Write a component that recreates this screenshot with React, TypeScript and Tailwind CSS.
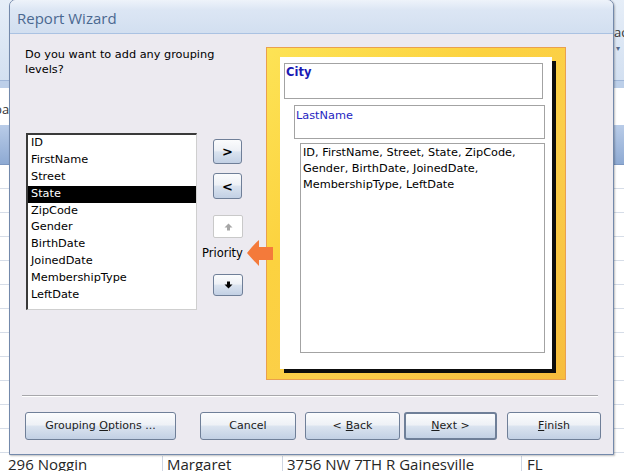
import React from 'react';

const fields = ['ID', 'FirstName', 'Street', 'State', 'ZipCode', 'Gender', 'BirthDate', 'JoinedDate', 'MembershipType', 'LeftDate'];

const btnBg =
  'bg-[linear-gradient(to_bottom,#fbfcfd_0%,#eef1f6_45%,#dae3ef_52%,#c2d0e4_100%)] border border-[#6f7f98] rounded-[3px]';

const WizButton = ({ children, className = '' }: { children: React.ReactNode; className?: string }) => (
  <button className={`${btnBg} h-[28px] flex items-center justify-center text-[11px] text-[#1c1c1c] ${className}`}>
    {children}
  </button>
);

const ArrowGlyph = ({ down, color }: { down?: boolean; color: string }) => (
  <svg width="9" height="8" viewBox="0 0 9 8" className={down ? 'rotate-180' : ''}>
    <path d="M4.5 0.5 L8.5 4.5 L6 4.5 L6 7.5 L3 7.5 L3 4.5 L0.5 4.5 Z" fill={color} />
  </svg>
);

export default function App() {
  return (
    <div
      className="relative w-[624px] h-[471px] overflow-hidden bg-white"
      style={{ fontFamily: '"DejaVu Sans", Verdana, sans-serif' }}
    >
      {/* Access window behind the dialog */}
      <div className="flex flex-col w-full">
        <div className="h-[80px] bg-[linear-gradient(to_bottom,#e6eef8,#d3e0f1)] flex justify-end">
          <div className="w-[10px] overflow-hidden pt-[25px] text-[13px] text-[#333] leading-[15px]" style={{ fontFamily: '"Open Sans", sans-serif' }}>
            ac
            <div className="text-[8px] text-[#56698a] pl-[2px] leading-[10px] mt-[3px]">▾</div>
          </div>
        </div>
        <div className="h-[8px] bg-[#bccfe9] border-t border-[#9fb6d8]" />
        <div className="h-[37px] bg-white flex items-end pb-[6px]">
          <span className="text-[13px] text-[#333] -ml-[6px]" style={{ fontFamily: '"Open Sans", sans-serif' }}>pa</span>
        </div>
        <div className="h-[40px] bg-[linear-gradient(to_bottom,#b9cce8,#8eaad3)] border-b border-[#7d98c2]" />
        {Array.from({ length: 12 }).map((_, i) => (
          <div key={i} className="h-[24px] border-b border-[#d6dde8] bg-white" />
        ))}
        <div
          className="h-[18px] bg-white flex text-[15px] leading-[17px] text-[#262626] pt-[3px]"
          style={{ fontFamily: '"Open Sans", "Liberation Sans", sans-serif' }}
        >
          <div className="w-[163px] pl-[8px] border-r border-[#cfd6e2]">296 Noggin</div>
          <div className="w-[120px] pl-[4px] border-r border-[#cfd6e2]">Margaret</div>
          <div className="w-[239px] pl-[4px] border-r border-[#cfd6e2] whitespace-nowrap overflow-hidden">3756 NW 7TH R Gainesville</div>
          <div className="pl-[5px]">FL</div>
        </div>
      </div>

      {/* Report Wizard dialog */}
      <div className="absolute left-[9px] -top-[1px] w-[605px] h-[456px] border border-[#7389ab] rounded-t-[7px] bg-[#eceaf0] flex flex-col shadow-[1px_1px_2px_rgba(0,0,0,0.25)]">
        <div className="h-[34px] shrink-0 rounded-t-[6px] bg-[linear-gradient(to_bottom,#eef3fa,#dce6f4_30%,#d2dff0)] border-b border-[#aac2e2] pl-[7px] pt-[7px]">
          <span className="text-[15px] text-[#4a6890] leading-[20px]" style={{ fontFamily: '"Open Sans", "Liberation Sans", sans-serif' }}>
            Report Wizard
          </span>
        </div>

        <div className="flex pl-[15px] pt-[13px]">
          <div className="w-[241px] flex flex-col">
            <p className="text-[11.3px] leading-[15px] text-black w-[200px]">Do you want to add any grouping levels?</p>
            <div className="flex mt-[56px]">
              <div className="ml-[1px] w-[171px] h-[177px] bg-white border-t-2 border-l-2 border-[#3a3a3a] border-r border-b border-r-[#cfcfcf] border-b-[#cfcfcf] flex flex-col">
                {fields.map(f => (
                  <div
                    key={f}
                    className={`h-[16.9px] leading-[16.9px] pl-[3px] text-[11.3px] ${f === 'State' ? 'bg-black text-white' : 'text-black'}`}
                  >
                    {f}
                  </div>
                ))}
              </div>
              <div className="ml-[16px] flex flex-col pt-[6px] w-[30px]">
                <button className={`${btnBg} h-[25px] w-[29px] text-[13px] font-bold leading-none`}>&gt;</button>
                <button className={`${btnBg} h-[26px] w-[29px] mt-[9px] text-[13px] font-bold leading-none`}>&lt;</button>
                <div className="h-[23px] w-[30px] mt-[16px] bg-white border border-[#c9c9c9] rounded-[2px] flex items-center justify-center">
                  <ArrowGlyph color="#a6a6a6" />
                </div>
                <div className="text-[11.5px] leading-[16px] -ml-[11px] mt-[7px] text-black">Priority</div>
                <button className={`${btnBg} h-[22px] w-[30px] mt-[13px] flex items-center justify-center`}>
                  <ArrowGlyph down color="#000" />
                </button>
              </div>
            </div>
          </div>

          {/* preview */}
          <div className="w-[300px] h-[333px] border border-[#eaa04e] bg-[linear-gradient(135deg,#fde355_0%,#fcd23f_35%,#fbce4a_60%,#f7bd3c_100%)] pl-[13px] pt-[9px]">
            <div className="w-[272px] h-[312px] bg-white shadow-[4px_4px_0_#0d0d0d] flex flex-col pt-[6px]">
              <div className="ml-[4px] w-[259px] h-[36px] border border-[#a3a3a3] pl-[1px] pt-[1px] text-[11.5px] font-bold text-[#1a1ab4] leading-[15px]">
                City
              </div>
              <div className="ml-[14px] mt-[6px] w-[251px] h-[34px] border border-[#a3a3a3] pl-[1px] pt-[2px] text-[11.3px] text-[#2525c2] leading-[15px]">
                LastName
              </div>
              <div className="ml-[20px] mt-[4px] w-[245px] h-[210px] border border-[#a3a3a3] pl-[2px] pt-[1px] text-[11.3px] text-black leading-[16px]">
                ID, FirstName, Street, State, ZipCode, Gender, BirthDate, JoinedDate, MembershipType, LeftDate
              </div>
            </div>
          </div>
        </div>

        <div className="ml-[12px] mt-[15px] w-[576px] border-t border-[#a7a7ab] border-b border-b-white" />

        <div className="flex mt-[15px] pl-[15px]">
          <WizButton className="w-[151px]">
            Grouping&nbsp;<span className="underline">O</span>ptions ...
          </WizButton>
          <WizButton className="w-[96px] ml-[24px]">Cancel</WizButton>
          <WizButton className="w-[95px] ml-[9px]">
            &lt; <span className="underline ml-[4px]">B</span>ack
          </WizButton>
          <WizButton className="w-[93px] ml-[4px] border-2 border-[#3f7db4]">
            <span className="underline">N</span>ext &gt;
          </WizButton>
          <WizButton className="w-[94px] ml-[10px]">
            <span className="underline">F</span>inish
          </WizButton>
        </div>
      </div>

      {/* orange pointer next to Priority */}
      <svg className="absolute left-[247px] top-[239px]" width="27" height="28" viewBox="0 0 27 28">
        <path d="M0 14 Q6 6 12 1 L12 8 L26 8 L26 21 L12 21 L12 27 Q6 21 0 14 Z" fill="#f47a3a" />
      </svg>
    </div>
  );
}
